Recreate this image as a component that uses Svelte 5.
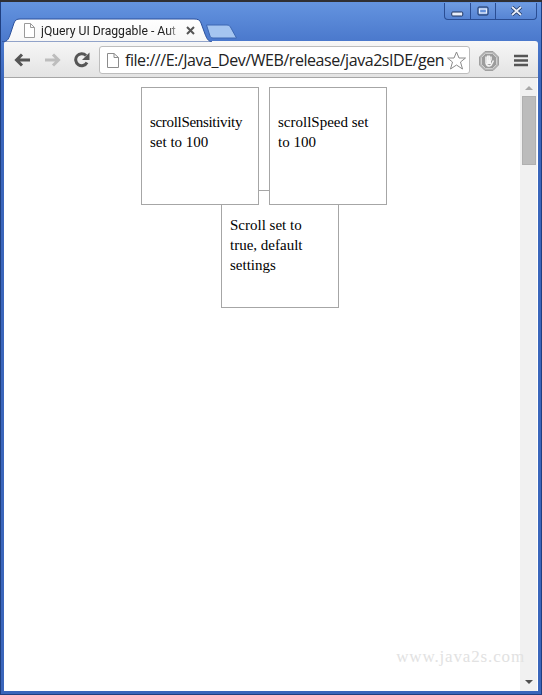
<script>
  const boxesTop = [
    { id: 'sensitivity', lead: 'scrollSensitivity', rest: ' set to 100', tight: true },
    { id: 'speed', lead: 'scrollSpeed', rest: ' set to 100', tight: false }
  ];
</script>

<div class="window">
  <header class="titlebar">
    <div class="tab">
      <svg class="tab-shape" width="210" height="24" viewBox="0 0 210 24">
        <defs>
          <linearGradient id="tabfill" x1="0" x2="0" y1="0" y2="1">
            <stop offset="0" stop-color="#ffffff" />
            <stop offset="1" stop-color="#f6f6f6" />
          </linearGradient>
        </defs>
        <path d="M0 24 C6 24 7 20 9 14 L12 5 C13 2 15 1 18 1 L192 1 C196 1 198 2 199 5 L203 16 C205 21 206 23 210 24 Z" fill="url(#tabfill)" stroke="#2c519c" stroke-width="1" />
      </svg>
      <svg class="page-icon" width="12" height="15" viewBox="0 0 12 15">
        <path d="M1.5 .5H7.5L11.5 4.5V14.5H1.5Z M7.5 .5V4.5H11.5" fill="#fff" stroke="#9a9a9a" />
      </svg>
      <span class="tab-title">jQuery UI Draggable - Aut</span>
      <svg class="tab-close" width="9" height="9" viewBox="0 0 9 9">
        <path d="M1 1L8 8M8 1L1 8" stroke="#555" stroke-width="2" />
      </svg>
    </div>
    <svg class="newtab" width="33" height="15" viewBox="0 0 33 15">
      <path d="M1.5 1 L22 1 C24 1 25 2 26 4 L31.500 14 L8 14 C6 14 5.500 13 5 12 Z" fill="#a5c5f0" stroke="#3d67b3" />
    </svg>
    <div class="controls">
      <span class="ctl ctl-min"><svg width="14" height="6" viewBox="0 0 14 6"><rect x=".75" y="1" width="11" height="4" rx="1" fill="#e8eefa" stroke="#1f3560" /></svg></span>
      <span class="ctl ctl-max"><svg width="12" height="10" viewBox="0 0 12 10"><rect x="1" y="1" width="10" height="8" rx="1" fill="none" stroke="#1f3560" /><rect x="2.500" y="3" width="7" height="4" fill="none" stroke="#e8eefa" stroke-width="1.300" /></svg></span>
      <span class="ctl ctl-close"><svg width="13" height="10" viewBox="0 0 13 10"><path d="M2 1L11 9M11 1L2 9" stroke="#1f3560" stroke-width="3.400" /><path d="M2 1L11 9M11 1L2 9" stroke="#e8eefa" stroke-width="1.800" /></svg></span>
    </div>
  </header>

  <nav class="toolbar">
    <svg class="tool" width="17" height="14" viewBox="0 0 17 14"><path d="M16 7H3M8 1.500L2.500 7L8 12.500" fill="none" stroke="#555" stroke-width="3" /></svg>
    <svg class="tool" width="17" height="14" viewBox="0 0 17 14"><path d="M1 7H14M9 1.500L14.500 7L9 12.500" fill="none" stroke="#bdbdbd" stroke-width="3" /></svg>
    <svg class="tool" width="16" height="16" viewBox="0 0 16 16"><path d="M13 10.500A6 6 0 1 1 12 3.500" fill="none" stroke="#555" stroke-width="3" /><path d="M15.500 .5V8H8Z" fill="#555" /></svg>
    <div class="omnibox">
      <svg class="omni-icon" width="12" height="15" viewBox="0 0 12 15"><path d="M.5 .5H7L11.500 4.500V14.500H.5Z M7 .5V4.500H11.500" fill="#fff" stroke="#8c8c8c" /></svg>
      <span class="url">file:///E:/Java_Dev/WEB/release/java2sIDE/gen</span>
      <svg class="star" width="19" height="19" viewBox="0 0 19 19"><path d="M9.500 1L12 7H18.500L13.500 11L15.500 18L9.500 14L3.500 18L5.500 11L.5 7H7Z" fill="#fff" stroke="#8a8a8a" /></svg>
    </div>
    <svg class="adblock" width="20" height="20" viewBox="0 0 20 20">
      <path d="M6 .5H14L19.500 6V14L14 19.500H6L.5 14V6Z" fill="#b5b5b5" stroke="#a0a0a0" />
      <path d="M6.500 2.500H13.500L17.500 6.500V13.500L13.500 17.500H6.500L2.500 13.500V6.500Z" fill="#9c9c9c" stroke="#d0d0d0" />
      <path d="M7 9V5.500M8.700 9V4.500M10.300 9V4.500M12 9.500V5.500M7 8V12C7.500 14.500 9 15 10.500 15C12 15 12.500 14 13 12.500L14.500 9.500" fill="none" stroke="#f4f4f4" stroke-width="1.500" />
      <path d="M7.500 9H12V13H8Z" fill="#f4f4f4" />
    </svg>
    <svg class="menu" width="14" height="13" viewBox="0 0 14 13"><path d="M0 2H14M0 6.500H14M0 11H14" stroke="#555" stroke-width="2.400" /></svg>
  </nav>

  <div class="viewport">
    <main class="page">
      <div class="row">
        {#each boxesTop as box (box.id)}
          <div class="box"><p><span class:tight={box.tight}>{box.lead}</span>{box.rest}</p></div>
        {/each}
      </div>
      <div class="box box-under"><p>Scroll set to true, default settings</p></div>
      <span class="watermark">www.java2s.com</span>
    </main>
    <aside class="scrollbar">
      <span class="arrow arrow-up"></span>
      <span class="thumb"></span>
      <span class="track"></span>
      <span class="arrow arrow-down"></span>
    </aside>
  </div>
</div>

<style>
  :global(body) {
    margin: 0;
    overflow: hidden;
  }

  .window {
    box-sizing: border-box;
    width: 542px;
    height: 695px;
    display: flex;
    flex-direction: column;
    padding: 0 4px 4px 4px;
    border-top: 2px solid #2f2f33;
    background: linear-gradient(180deg, #6494e0 0, #4a78cc 40px, #3a66bb 80px, #3a66bb 100%);
    box-shadow: inset 1px 0 0 #1f3f80, inset -1px 0 0 #1f3f80, inset 0 -1px 0 #1f3f80;
  }

  .titlebar {
    position: relative;
    height: 39px;
    flex: none;
  }

  .tab {
    position: absolute;
    left: 2px;
    top: 17px;
    width: 202px;
    height: 23px;
    display: flex;
    align-items: center;
    font: 12.2px Roboto, "Open Sans", sans-serif;
    color: #222;
  }

  .tab-shape {
    position: absolute;
    left: -4px;
    top: -1px;
  }

  .page-icon {
    position: relative;
    margin-left: 17px;
    flex: none;
  }

  .tab-title {
    position: relative;
    margin-left: 6px;
    width: 137px;
    white-space: nowrap;
    -webkit-mask-image: linear-gradient(90deg, #000 92%, rgba(0, 0, 0, .25));
    mask-image: linear-gradient(90deg, #000 92%, rgba(0, 0, 0, .25));
  }

  .tab-close {
    position: relative;
    margin-left: 8px;
  }

  .newtab {
    position: absolute;
    left: 201px;
    top: 22px;
  }

  .controls {
    position: absolute;
    right: 1px;
    top: 1px;
    width: 93px;
    height: 17px;
    box-sizing: border-box;
    display: flex;
    border: 1px solid #2a4d93;
    border-top: 0;
    border-radius: 0 0 4px 4px;
    background: linear-gradient(180deg, #6f9ce2, #5684d3);
  }

  .ctl {
    display: flex;
    align-items: center;
    justify-content: center;
  }

  .ctl-min { width: 26px; border-right: 1px solid #2a4d93; padding-top: 5px; box-sizing: border-box; }
  .ctl-max { width: 25px; border-right: 1px solid #2a4d93; box-sizing: border-box; }
  .ctl-close { flex: 1; }

  .toolbar {
    height: 37px;
    flex: none;
    display: flex;
    align-items: center;
    box-sizing: border-box;
    padding: 2px 0 0 10px;
    border-radius: 3px 3px 0 0;
    background: linear-gradient(180deg, #f7f7f7, #e3e3e3);
    border-bottom: 1px solid #a6a6a6;
  }

  .tool {
    flex: none;
    margin-right: 13px;
  }

  .omnibox {
    margin-left: -4px;
    width: 371px;
    height: 28px;
    box-sizing: border-box;
    display: flex;
    align-items: center;
    background: #fff;
    border: 1px solid #bdbdbd;
    border-radius: 3px;
    padding-left: 7px;
    font: 16px "Open Sans", "Noto Sans", sans-serif;
    letter-spacing: -.45px;
    color: #222;
  }

  .omni-icon { flex: none; }

  .url {
    margin-left: 6px;
    width: 319px;
    white-space: nowrap;
    flex: none;
  }

  .star { flex: none; margin-left: 3px; }

  .adblock {
    flex: none;
    margin: 2px 0 0 9px;
  }

  .menu {
    flex: none;
    margin-left: 15px;
  }

  .viewport {
    flex: 1;
    min-height: 0;
    display: flex;
    background: #fff;
  }

  .page {
    position: relative;
    flex: 1;
    padding: 9px 0 0 137px;
    font: 15px/20px "Liberation Serif", "Times New Roman", serif;
    color: #000;
  }

  .row {
    position: relative;
    z-index: 1;
    display: flex;
    gap: 10px;
  }

  .box {
    box-sizing: border-box;
    width: 118px;
    height: 118px;
    padding: 8px;
    border: 1px solid #a6a6a6;
    background: #fff;
  }

  .box p { margin: 16px 0; }

  .tight { letter-spacing: -.32px; }

  .box-under {
    margin: -15px 0 0 80px;
  }

  .watermark {
    position: absolute;
    right: -5px;
    bottom: 24px;
    font: 17px/20px "Liberation Serif", serif;
    letter-spacing: .85px;
    color: #e2e2e2;
  }

  .scrollbar {
    width: 17px;
    margin-right: 1px;
    flex: none;
    display: flex;
    flex-direction: column;
    align-items: center;
    background: #f1f1f1;
  }

  .arrow {
    width: 0;
    height: 0;
    flex: none;
    border-left: 4px solid transparent;
    border-right: 4px solid transparent;
  }

  .arrow-up {
    margin: 8px 0 6px;
    border-bottom: 4px solid #a8a8a8;
  }

  .arrow-down {
    margin: 6px 0 7px;
    border-top: 4px solid #505050;
  }

  .thumb {
    width: 14px;
    height: 69px;
    flex: none;
    background: #bcbcbc;
    border: 1px solid #b0b0b0;
    box-sizing: border-box;
  }

  .track { flex: 1; }
</style>
